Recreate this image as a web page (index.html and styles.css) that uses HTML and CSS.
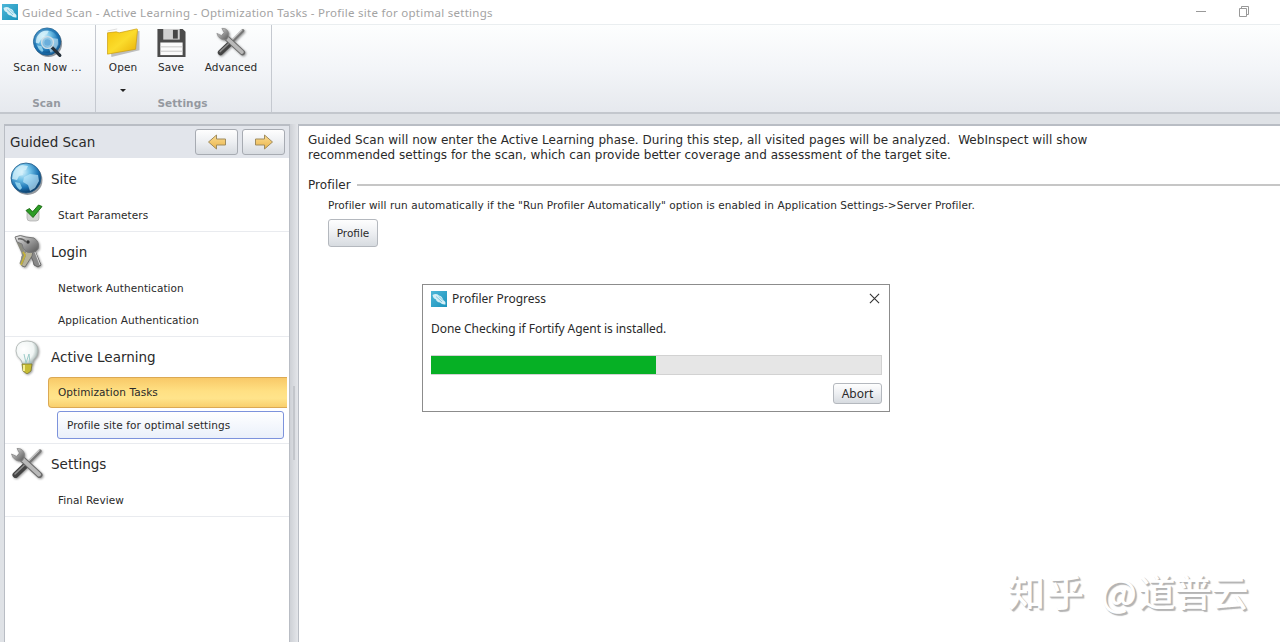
FILE: index.html
```html
<!DOCTYPE html>
<html lang="en">
<head>
    <meta charset="utf-8" />
    <title>Guided Scan - Active Learning</title>
    <link rel="stylesheet" href="styles.css">
</head>
<body>
    <!-- Shared icon shapes -->
    <svg class="defs" width="0" height="0">
        <defs>
            <radialGradient id="globeFill" cx="0.38" cy="0.3" r="0.75">
                <stop offset="0" stop-color="#d8f3fc" />
                <stop offset="0.35" stop-color="#6fbfe6" />
                <stop offset="0.7" stop-color="#1c74b4" />
                <stop offset="1" stop-color="#0a3157" />
            </radialGradient>
            <linearGradient id="metal" x1="0" y1="0" x2="1" y2="1">
                <stop offset="0" stop-color="#eeeeee" />
                <stop offset="0.5" stop-color="#9a9a9a" />
                <stop offset="1" stop-color="#555555" />
            </linearGradient>
            <linearGradient id="folderFill" x1="0" y1="0" x2="1" y2="1">
                <stop offset="0" stop-color="#f3c30c" />
                <stop offset="0.5" stop-color="#fbdc2c" />
                <stop offset="1" stop-color="#e8ae05" />
            </linearGradient>
            <linearGradient id="arrowFill" x1="0" y1="0" x2="0" y2="1">
                <stop offset="0" stop-color="#fbdc92" />
                <stop offset="1" stop-color="#eab54b" />
            </linearGradient>
            <linearGradient id="appFill" x1="0" y1="0" x2="1" y2="1">
                <stop offset="0" stop-color="#4cb6d8" />
                <stop offset="1" stop-color="#1b93bb" />
            </linearGradient>
            <radialGradient id="bulbFill" cx="0.35" cy="0.35" r="0.7">
                <stop offset="0" stop-color="#ffffff" />
                <stop offset="0.65" stop-color="#f0f5f4" />
                <stop offset="1" stop-color="#9aaba8" />
            </radialGradient>
        </defs>
        <symbol id="app" viewBox="0 0 16 16">
            <rect width="16" height="16" fill="url(#appFill)" />
            <path d="M1.500 4Q5 2 8 4.500Q11 5 12 8.500Q14.500 10 14.500 13.500Q11 14 9 11.500Q5.500 11 5 8.500Q2 7.500 1.500 4z" fill="#d3eef6" />
            <path d="M5 5.500L11 11M8 5.500l4 4" stroke="#62bdd8" stroke-width=".8" />
        </symbol>
        <symbol id="globe" viewBox="0 0 34 34">
            <circle cx="17.500" cy="18" r="15" fill="#3c4650" opacity=".55" />
            <circle cx="16" cy="16" r="15" fill="url(#globeFill)" stroke="#225b86" stroke-width=".8" />
            <path d="M3 12Q5 5 12 3l6 1-2 4-4 1 1 4-4 1-2 4-5-1z" fill="#d9f3fb" opacity=".75" />
            <path d="M14 15l6-3 8 1 1 6-4 7-5 3-2-6-5-3z" fill="#c5eafa" opacity=".65" />
            <path d="M5 20l5 1 2 5-2 2Q6 25 5 20z" fill="#a2def4" opacity=".8" />
        </symbol>
        <symbol id="tools" viewBox="0 0 34 34">
            <g fill="none" stroke-linecap="round">
                <path d="M30 4L18 16" stroke="#777" stroke-width="3.500" />
                <path d="M29 3.500L18 14.500" stroke="#c9c9c9" stroke-width="1.200" />
                <path d="M17 17L5.500 28" stroke="#444" stroke-width="6" />
                <path d="M15 17.500L5 27" stroke="#8d8d8d" stroke-width="1.600" />
                <path d="M10 10L29.500 28" stroke="#6a6a6a" stroke-width="6" />
                <path d="M10 10L29 27.500" stroke="#b9b9b9" stroke-width="4" />
            </g>
            <path d="M7 1.500Q13 1 14.500 7Q15 11 12 14Q4 15 1.500 7L6.500 9.500L9.500 6z" fill="url(#metal)" stroke="#888" stroke-width=".8" />
        </symbol>
    </svg>

    <!-- Title Bar -->
    <div class="titlebar">
        <svg class="appIcon"><use href="#app" /></svg>
        <span class="windowTitle">Guided Scan - Active Learning - Optimization Tasks - Profile site for optimal settings</span>
        <svg class="windowButtons" viewBox="0 0 58 12">
            <path d="M0 5.500h10" stroke="#999" />
            <path d="M43.500 2.500h7v8h-7zM45.500 2.500v-2h7v8h-2" fill="none" stroke="#999" />
        </svg>
    </div>

    <!-- Ribbon -->
    <div class="ribbon">
        <div class="group scanGroup">
            <div class="tools">
                <div class="tool">
                    <svg class="toolIcon" viewBox="0 0 34 34">
                        <use href="#globe" width="34" height="34" />
                        <circle cx="16" cy="16" r="13.500" fill="none" stroke="#1b6fae" stroke-width="2.500" opacity=".7" />
                        <path d="M21 22l9 9" stroke="#26313b" stroke-width="3.500" stroke-linecap="round" />
                        <circle cx="16.500" cy="17" r="6.500" fill="#8fc3e2" fill-opacity=".75" stroke="#cfdde5" stroke-width="1.500" />
                        <circle cx="16.500" cy="17" r="3.500" fill="#6aaedb" />
                    </svg>
                    <span>Scan Now ...</span>
                </div>
            </div>
            <div class="groupName">Scan</div>
        </div>
        <div class="group settingsGroup">
            <div class="tools">
                <div class="tool open">
                    <svg class="toolIcon wide" viewBox="0 0 36 32">
                        <path d="M4 7L35 4v20L6 31z" fill="#777" opacity=".45" />
                        <path d="M2 6l9-1 3 1 18-4q1 0 1 1l-2 20L2 28z" fill="url(#folderFill)" stroke="#c99a0a" stroke-width=".7" />
                        <path d="M2 4l10-2" stroke="#ddd" />
                    </svg>
                    <span>Open</span>
                    <i class="caret"></i>
                </div>
                <div class="tool save">
                    <svg class="toolIcon" viewBox="0 0 32 32">
                        <path d="M2 2h26l3 3v26H2z" fill="#4b4b4b" />
                        <path d="M8 2h17v11H8z" fill="#d0d0d0" />
                        <path d="M18 3h5v9h-5z" fill="#444" />
                        <path d="M5 16h23v13H5z" fill="#fafafa" />
                        <path d="M5 20.500h23M5 25h23" stroke="#c4c4c4" />
                    </svg>
                    <span>Save</span>
                </div>
                <div class="tool advanced">
                    <svg class="toolIcon shadow"><use href="#tools" /></svg>
                    <span>Advanced</span>
                </div>
            </div>
            <div class="groupName">Settings</div>
        </div>
    </div>

    <div class="workspace">
        <!-- Navigation -->
        <div class="sidebar">
            <div class="sidebarHeader">
                <h2>Guided Scan</h2>
                <button class="navButton">
                    <svg viewBox="0 0 20 16"><path d="M1.500 8L9.500 1v4h9v6h-9v4z" fill="url(#arrowFill)" stroke="#a08c5e" /></svg>
                </button>
                <button class="navButton">
                    <svg viewBox="0 0 20 16"><path d="M18.500 8L10.500 1v4h-9v6h9v4z" fill="url(#arrowFill)" stroke="#a08c5e" /></svg>
                </button>
            </div>

            <div class="section">
                <div class="heading site">
                    <svg class="headIcon"><use href="#globe" /></svg>Site
                </div>
                <div class="step start">
                    <svg class="check" viewBox="0 0 18 18">
                        <path d="M2 7h12v7q0 3-3 3H5q-3 0-3-3z" fill="#d4d6d4" stroke="#aaa" stroke-width=".7" />
                        <path d="M1 6.500l3.500-2L7.500 8L13.500 1l3.500 1.500L8 13.500z" fill="#2c9c26" stroke="#17660f" stroke-width=".9" />
                    </svg>
                    Start Parameters
                </div>
            </div>

            <div class="section">
                <div class="heading">
                    <svg class="headIcon shadow" viewBox="0 0 34 34">
                        <path d="M16 10l8-1 1 7 6 14-3 2-4-2-1-4-4-9z" fill="#888" stroke="#555" stroke-width=".8" />
                        <path d="M19 13l4 3-1 5-7 11-3-1-1-3 1-7z" fill="#b6b29a" stroke="#666" stroke-width=".8" />
                        <path d="M8 6l5 11 1 4-3 8" fill="none" stroke="#8c8c80" stroke-width="3.500" />
                        <path d="M13 17l2 3-4 10" fill="none" stroke="#c4b23a" stroke-width="1.800" />
                        <path d="M5 2Q10-1 16 2l8 1q6 4 4 11-4 5-11 3-5-3-5-8L7 7z" fill="url(#metal)" stroke="#777" stroke-width="1" />
                        <path d="M8 4q5-1 8 3" fill="none" stroke="#666" stroke-width="1.500" />
                        <circle cx="18" cy="7" r="1.700" fill="#333" />
                        <path d="M25 17l5 13" stroke="#d7d7d7" />
                    </svg>
                    Login
                </div>
                <div class="step">Network Authentication</div>
                <div class="step">Application Authentication</div>
            </div>

            <div class="section">
                <div class="heading">
                    <svg class="headIcon shadow" viewBox="0 0 34 34">
                        <path d="M17 1Q28 1 28 11Q28 16 23.500 20L22 25H13L11 20Q6 16 6 11Q6 1 17 1z" fill="url(#bulbFill)" stroke="#a9b1af" stroke-width=".8" />
                        <path d="M14 14l2 9 3-9 1 9" fill="none" stroke="#9ccbc8" />
                        <path d="M12 24h10l-1 7-4 3-4-3z" fill="#c7bd35" stroke="#75722e" stroke-width=".7" />
                        <path d="M14 25v6" stroke="#f5ef91" stroke-width="2" />
                    </svg>
                    Active Learning
                </div>
                <div class="step current">Optimization Tasks</div>
                <div class="substep">Profile site for optimal settings</div>
            </div>

            <div class="section">
                <div class="heading">
                    <svg class="headIcon shadow"><use href="#tools" /></svg>Settings
                </div>
                <div class="step">Final Review</div>
            </div>
        </div>

        <div class="splitter"><div class="grip"></div></div>

        <!-- Main Content -->
        <div class="content">
            <p class="intro">Guided Scan will now enter the Active Learning phase. During this step, all visited pages will be analyzed.&nbsp; WebInspect will show<br><span class="introEnd">recommended settings for the scan, which can provide better coverage and assessment of the target site.</span></p>
            <div class="profilerTitle">Profiler</div>
            <p class="note">Profiler will run automatically if the "Run Profiler Automatically" option is enabled in Application Settings-&gt;Server Profiler.</p>
            <button class="profileButton">Profile</button>
        </div>
    </div>

    <!-- Progress Dialog -->
    <div class="dialog">
        <div class="dialogTitle">
            <svg class="appIcon"><use href="#app" /></svg>
            <span>Profiler Progress</span>
            <svg class="close" viewBox="0 0 12 12"><path d="M1 1l10 10M11 1L1 11" stroke="#333" stroke-width="1.200" /></svg>
        </div>
        <p class="status">Done Checking if Fortify Agent is installed.</p>
        <div class="progress"><div class="bar" style="width: 50%;"></div></div>
        <button class="abort">Abort</button>
    </div>

    <div class="watermark"><span class="brand">知乎</span><span class="at">@</span><span>道普云</span></div>
</body>
</html>
```
FILE: styles.css
```css
* {
    box-sizing: border-box;
}

body {
    margin: 0;
    height: 642px;
    overflow: hidden;
    display: flex;
    flex-direction: column;
    position: relative;
    background: #fff;
    color: #2a2a2a;
    font-family: "DejaVu Sans", sans-serif;
    font-size: 10.5px;
    letter-spacing: 0.07px;
}

p, h2 {
    margin: 0;
    font-weight: normal;
}

button {
    font-family: inherit;
    color: #2a2a2a;
    padding: 0;
    border: 1px solid #b4b8be;
    border-radius: 3px;
    background: linear-gradient(#fefefe, #edeff2 50%, #d7dbe0);
}

.defs {
    position: absolute;
}

.shadow {
    filter: drop-shadow(1px 1px 1px rgba(0, 0, 0, 0.4));
}

/* title bar */
.titlebar {
    height: 25px;
    flex: none;
    display: flex;
    align-items: center;
    padding: 0 26px 0 2px;
    border-bottom: 1px solid #eaeef0;
}

.appIcon {
    width: 16px;
    height: 16px;
    flex: none;
}

.windowTitle {
    margin-left: 4px;
    color: #a3a3a3;
    font-family: "Noto Sans", sans-serif;
    font-size: 11.5px;
    letter-spacing: 0.27px;
    white-space: nowrap;
}

.windowButtons {
    margin-left: auto;
    width: 58px;
    height: 12px;
}

/* ribbon */
.ribbon {
    height: 89px;
    flex: none;
    display: flex;
    background: linear-gradient(#fdfefe, #f3f5f8 50%, #e6e9ee);
    border-bottom: 2px solid #c3c7cd;
}

.group {
    display: flex;
    flex-direction: column;
    justify-content: space-between;
    border-right: 1px solid #c5c9d0;
}

.scanGroup {
    width: 96px;
}

.settingsGroup {
    width: 176px;
}

.tools {
    display: flex;
    justify-content: center;
}

.settingsGroup .tools {
    padding-right: 1px;
}

.tool {
    display: flex;
    flex-direction: column;
    align-items: center;
    white-space: nowrap;
    padding-top: 2px;
}

.tool span {
    line-height: 14px;
    margin-top: 2px;
}

.scanGroup .tool span {
    letter-spacing: 0.3px;
}

.toolIcon {
    width: 32px;
    height: 31px;
}

.toolIcon.wide {
    width: 36px;
}

.open {
    width: 48px;
}

.save {
    width: 48px;
}

.advanced {
    width: 72px;
}

.caret {
    margin-top: 15px;
    border: 3px solid transparent;
    border-top-color: #222;
    border-bottom: none;
}

.groupName {
    color: #9599a0;
    font-weight: bold;
    text-align: center;
    line-height: 14px;
    padding: 0 2px 2px 0;
}

/* workspace */
.workspace {
    flex: 1;
    display: flex;
    padding: 10px 0 0 4px;
    background: #dfe2e6;
}

.sidebar {
    width: 286px;
    background: #fff;
    border: 1px solid #b9bdc4;
    border-top-width: 2px;
    border-bottom: none;
}

.sidebarHeader {
    height: 32px;
    display: flex;
    align-items: center;
    padding: 0 4px 0 5px;
    gap: 4px;
    background: #e2e5eb;
}

.sidebarHeader h2 {
    flex: 1;
    font-size: 13.5px;
    letter-spacing: 0;
}

.navButton {
    width: 43px;
    height: 26px;
    border-color: #a7abb2;
}

.navButton svg {
    display: block;
    margin: auto;
    width: 20px;
    height: 16px;
}

.section {
    border-bottom: 1px solid #e9ebef;
}

.heading {
    height: 40px;
    display: flex;
    align-items: center;
    gap: 7px;
    padding-left: 5px;
    font-size: 13.5px;
    letter-spacing: 0;
}

.site {
    height: 42px;
}

.headIcon {
    width: 34px;
    height: 34px;
}

.step {
    height: 32px;
    display: flex;
    align-items: center;
    padding: 0 0 1px 53px;
}

.start {
    height: 31px;
    padding: 0 0 2px 20px;
    gap: 15px;
}

.check {
    width: 18px;
    height: 18px;
    margin-top: -4px;
}

.current {
    height: 31px;
    margin: 0 2px 0 43px;
    padding-left: 9px;
    border: 1px solid #dba954;
    border-right: none;
    border-radius: 4px 0 0 4px;
    background: linear-gradient(#f8c968, #ffe083 45%, #ffe48b 70%, #f9cf6d);
}

.substep {
    height: 28px;
    margin: 3px 5px 4px 52px;
    padding-left: 9px;
    line-height: 26px;
    border: 1px solid #7d93dc;
    border-radius: 3px;
    background: linear-gradient(#fff, #eaf0fa);
}

.splitter {
    width: 8px;
    display: flex;
    justify-content: center;
    background: linear-gradient(to right, #ced1d6, #e4e6ea);
}

.grip {
    width: 2px;
    height: 74px;
    margin-top: 262px;
    background: #c3c6cb;
}

.content {
    flex: 1;
    background: #fff;
    border: 1px solid #b9bdc4;
    border-top-width: 2px;
    border-right: none;
    border-bottom: none;
    padding: 7px 0 0 9px;
    white-space: nowrap;
}

.intro {
    font-size: 12px;
    line-height: 14.5px;
    letter-spacing: 0.05px;
}

.introEnd {
    letter-spacing: 0.02px;
}

.profilerTitle {
    display: flex;
    align-items: center;
    gap: 6px;
    margin-top: 15px;
    font-size: 12px;
    line-height: 16px;
}

.profilerTitle::after {
    content: "";
    flex: 1;
    height: 2px;
    background: #c6c6c6;
}

.note {
    margin: 5px 0 0 20px;
    line-height: 15px;
}

.profileButton {
    display: block;
    width: 50px;
    height: 28px;
    margin: 6px 0 0 20px;
    font-size: 10.5px;
}

/* progress dialog floats over the page */
.dialog {
    position: absolute;
    left: 422px;
    top: 284px;
    width: 468px;
    height: 128px;
    padding: 6px 7px 0 8px;
    display: flex;
    flex-direction: column;
    background: #fff;
    border: 1px solid #8c8c8c;
    font-family: "Noto Sans", sans-serif;
    font-size: 12px;
    letter-spacing: 0;
}

.dialogTitle {
    height: 16px;
    display: flex;
    align-items: center;
    gap: 5px;
}

.dialogTitle span {
    margin-top: -2px;
}

.close {
    width: 11px;
    height: 11px;
    margin: -2px 2px 0 auto;
}

.status {
    margin-top: 13px;
    line-height: 18px;
    letter-spacing: -0.05px;
}

.progress {
    height: 20px;
    flex: none;
    margin-top: 17px;
    background: #e6e6e6;
    border: 1px solid #d2d2d2;
    border-left: none;
}

.bar {
    height: 18px;
    background: #06b025;
}

.abort {
    width: 49px;
    height: 21px;
    margin: 8px 0 0 auto;
    font-size: 12px;
}

.watermark {
    position: absolute;
    left: 1008px;
    top: 565px;
    display: flex;
    color: #fff;
    font-family: "Noto Sans CJK SC", sans-serif;
    font-size: 37px;
    font-weight: 500;
    line-height: 52px;
    letter-spacing: -0.5px;
    white-space: nowrap;
    text-shadow: 1px 1px 0 #b4b4b4, 2px 2px 1px #b4b4b4;
}

.brand {
    letter-spacing: 2px;
}

.at {
    margin: 0 2px 0 15px;
}
```
